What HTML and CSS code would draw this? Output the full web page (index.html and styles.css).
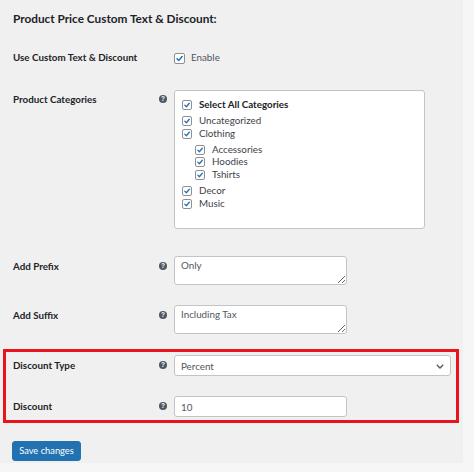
FILE: index.html
```html
<!DOCTYPE html>
<html>
<head>
<meta charset="utf-8">
<link rel="stylesheet" href="styles.css">
</head>
<body>
<div class="page">
  <h2 class="title">Product Price Custom Text &amp; Discount:</h2>

  <div class="row row-enable">
    <div class="label">Use Custom Text &amp; Discount</div>
    <div class="help-col"></div>
    <label class="field check-line">
      <span class="cb"><svg viewBox="0 0 10 10"><path d="M2.2 5.2 L4.2 7.2 L7.9 2.8" /></svg></span>
      <span class="enable-text">Enable</span>
    </label>
  </div>

  <div class="row row-cats">
    <div class="label label-cats">Product Categories</div>
    <div class="help-col help-cats"><span class="help">?</span></div>
    <div class="field cats">
      <ul class="cat-list">
        <li class="cat-all"><span class="cb sm"><svg viewBox="0 0 10 10"><path d="M2.2 5.2 L4.2 7.2 L7.9 2.8" /></svg></span><span class="all-text">Select All Categories</span></li>
        <li><span class="cb sm"><svg viewBox="0 0 10 10"><path d="M2.2 5.2 L4.2 7.2 L7.9 2.8" /></svg></span>Uncategorized</li>
        <li><span class="cb sm"><svg viewBox="0 0 10 10"><path d="M2.2 5.2 L4.2 7.2 L7.9 2.8" /></svg></span>Clothing
          <ul class="sub-list">
            <li><span class="cb sm"><svg viewBox="0 0 10 10"><path d="M2.2 5.2 L4.2 7.2 L7.9 2.8" /></svg></span>Accessories</li>
            <li><span class="cb sm"><svg viewBox="0 0 10 10"><path d="M2.2 5.2 L4.2 7.2 L7.9 2.8" /></svg></span>Hoodies</li>
            <li><span class="cb sm"><svg viewBox="0 0 10 10"><path d="M2.2 5.2 L4.2 7.2 L7.9 2.8" /></svg></span>Tshirts</li>
          </ul>
        </li>
        <li><span class="cb sm"><svg viewBox="0 0 10 10"><path d="M2.2 5.2 L4.2 7.2 L7.9 2.8" /></svg></span>Decor</li>
        <li><span class="cb sm"><svg viewBox="0 0 10 10"><path d="M2.2 5.2 L4.2 7.2 L7.9 2.8" /></svg></span>Music</li>
      </ul>
    </div>
  </div>

  <div class="row row-prefix">
    <div class="label label-ta">Add Prefix</div>
    <div class="help-col help-ta"><span class="help">?</span></div>
    <div class="field"><textarea class="ta">Only</textarea></div>
  </div>

  <div class="row row-suffix">
    <div class="label label-ta">Add Suffix</div>
    <div class="help-col help-ta"><span class="help">?</span></div>
    <div class="field"><textarea class="ta">Including Tax</textarea></div>
  </div>

  <div class="highlight">
    <div class="row row-type">
      <div class="label label-in">Discount Type</div>
      <div class="help-col help-in"><span class="help">?</span></div>
      <div class="field">
        <div class="select">
          <span class="select-value">Percent</span>
          <svg class="chev" viewBox="0 0 8 5"><path d="M0.8 0.8 L4 4 L7.2 0.8" /></svg>
        </div>
      </div>
    </div>
    <div class="row row-discount">
      <div class="label label-in">Discount</div>
      <div class="help-col help-in"><span class="help">?</span></div>
      <div class="field"><div class="input">10</div></div>
    </div>
  </div>

  <div class="actions">
    <button class="btn">Save changes</button>
  </div>
</div>
</body>
</html>
```

FILE: styles.css
```css
html, body {
  margin: 0;
  padding: 0;
}
body {
  background: #f6f6f7;
  font-family: Lato, "Open Sans", "Liberation Sans", sans-serif;
  color: #1d2327;
  width: 474px;
  height: 472px;
  overflow: hidden;
}
.page {
  width: 463px;
  height: 463px;
  background: #f0f0f1;
  padding-left: 13px;
  box-sizing: border-box;
}
.title {
  margin: 0;
  padding-top: 11px;
  font-size: 11.8px;
  line-height: 16px;
  font-weight: 700;
  color: #1d2327;
}
.row {
  display: grid;
  grid-template-columns: 146px 15px auto;
  align-items: start;
}
.label {
  font-size: 9.8px;
  font-weight: 700;
  line-height: 14px;
  color: #1d2327;
}
.help-col {
  display: flex;
}
.help {
  display: inline-flex;
  align-items: center;
  justify-content: center;
  width: 8px;
  height: 8px;
  border-radius: 50%;
  background: #50575e;
  color: #fff;
  font-size: 6.5px;
  font-weight: 700;
  line-height: 8px;
  font-family: "Liberation Sans", sans-serif;
}

/* checkboxes */
.cb {
  display: inline-flex;
  align-items: center;
  justify-content: center;
  width: 11px;
  height: 11px;
  box-sizing: border-box;
  border: 1px solid #8c8f94;
  border-radius: 2px;
  background: #fff;
  flex: none;
}
.cb svg {
  width: 9px;
  height: 9px;
  fill: none;
  stroke: #2271b1;
  stroke-width: 1.6;
  stroke-linecap: round;
  stroke-linejoin: round;
}
.cb.sm {
  width: 10px;
  height: 10px;
  margin-right: 7px;
}
.cb.sm svg {
  width: 8px;
  height: 8px;
}

.row-enable {
  margin-top: 23px;
}
.check-line {
  display: flex;
  align-items: center;
  height: 14px;
  font-size: 9.8px;
  color: #50575e;
}
.check-line .cb {
  margin-right: 6px;
  margin-top: 2px;
}

.row-cats {
  margin-top: 26px;
}
.label-cats {
  padding-top: 2px;
}
.help-cats {
  padding-top: 5px;
}
.cats {
  width: 251px;
  height: 139px;
  box-sizing: border-box;
  border: 1px solid #c3c4c7;
  border-radius: 3px;
  background: #fff;
  padding: 7px 0 0 7px;
}
.cat-list, .sub-list {
  list-style: none;
  margin: 0;
  padding: 0;
}
.cat-list li {
  font-size: 9.8px;
  line-height: 12.6px;
  color: #3c434a;
}
.cat-list li .cb {
  vertical-align: -1px;
}
.cat-all {
  margin-bottom: 3.5px;
}
.all-text {
  font-weight: 700;
  color: #1d2327;
}
.sub-list {
  padding-left: 13px;
  margin: 3.5px 0;
}

.row-prefix {
  margin-top: 27px;
}
.row-suffix {
  margin-top: 20px;
}
.label-ta {
  padding-top: 3px;
}
.help-ta {
  padding-top: 6px;
}
.ta {
  display: block;
  width: 173px;
  height: 29px;
  box-sizing: border-box;
  margin: 0;
  border: 1px solid #c3c4c7;
  border-radius: 3px;
  background: #fff;
  padding: 2px 6px;
  font-family: Lato, "Open Sans", "Liberation Sans", sans-serif;
  font-size: 9.8px;
  line-height: 13px;
  color: #50575e;
  resize: vertical;
  overflow: hidden;
}

.highlight {
  margin-top: 15px;
  margin-left: -10px;
  width: 456px;
  height: 74px;
  box-sizing: border-box;
  border: 3px solid #e8141b;
  padding: 3px 0 0 7px;
}
.label-in {
  padding-top: 3px;
}
.help-in {
  padding-top: 6px;
}
.select {
  position: relative;
  width: 277px;
  height: 21px;
  box-sizing: border-box;
  border: 1px solid #c3c4c7;
  border-radius: 3px;
  background: #fff;
  padding-left: 6px;
  display: flex;
  align-items: center;
  font-size: 9.8px;
  color: #50575e;
}
.chev {
  position: absolute;
  right: 6px;
  top: 8px;
  width: 8px;
  height: 5px;
  fill: none;
  stroke: #50575e;
  stroke-width: 1.3;
}
.row-discount {
  margin-top: 20px;
}
.input {
  width: 173px;
  height: 21px;
  box-sizing: border-box;
  border: 1px solid #c3c4c7;
  border-radius: 3px;
  background: #fff;
  padding-left: 6px;
  display: flex;
  align-items: center;
  font-size: 9.8px;
  color: #50575e;
}

.actions {
  margin-top: 18px;
  margin-left: -1px;
}
.btn {
  display: block;
  width: 69px;
  height: 20px;
  padding: 0;
  margin: 0;
  border: 1px solid #2271b1;
  border-radius: 3px;
  background: #2271b1;
  color: #fff;
  font-family: Lato, "Open Sans", "Liberation Sans", sans-serif;
  font-size: 9.3px;
  line-height: 18px;
  text-align: center;
}
```
